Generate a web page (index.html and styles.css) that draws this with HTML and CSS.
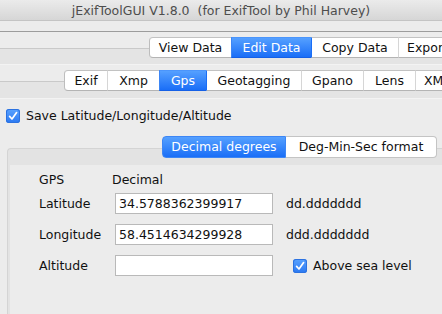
FILE: index.html
```html
<!DOCTYPE html>
<html>
<head>
<meta charset="utf-8">
<link rel="stylesheet" href="styles.css">
</head>
<body>
<div class="window">
  <div class="titlebar">jExifToolGUI V1.8.0&nbsp; (for ExifTool by Phil Harvey)</div>
  <div class="toolbar"></div>
  <div class="outer">
    <div class="tabrow tabrow-main">
      <div class="tab w-view">View Data</div>
      <div class="tab w-edit sel">Edit Data</div>
      <div class="tab w-copy">Copy Data</div>
      <div class="tab w-expo">Export</div>
    </div>
    <div class="band"></div>
    <div class="tabrow tabrow-sub">
      <div class="tab w-exif">Exif</div>
      <div class="tab w-xmp">Xmp</div>
      <div class="tab w-gps sel">Gps</div>
      <div class="tab w-geo">Geotagging</div>
      <div class="tab w-gpano">Gpano</div>
      <div class="tab w-lens">Lens</div>
      <div class="tab w-xmx">XMP</div>
    </div>
    <div class="band band-sub"></div>
    <div class="content">
      <label class="check-row">
        <span class="checkbox"><svg viewBox="0 0 14 14" width="14" height="14"><path d="M3.6 7.4 L6 10 L10.6 3.6" fill="none" stroke="#fff" stroke-width="1.7" stroke-linecap="round" stroke-linejoin="round"/></svg></span>
        <span>Save Latitude/Longitude/Altitude</span>
      </label>
      <div class="seg-wrap">
        <div class="segmented">
          <div class="seg sel seg-dec">Decimal degrees</div>
          <div class="seg seg-dms">Deg-Min-Sec format</div>
        </div>
      </div>
      <div class="panel">
        <div class="form-head">
          <span class="col-label">GPS</span>
          <span class="col-dec">Decimal</span>
        </div>
        <div class="form">
          <span class="lbl">Latitude</span>
          <div class="input">34.5788362399917</div>
          <span class="hint">dd.ddddddd</span>

          <span class="lbl">Longitude</span>
          <div class="input">58.4514634299928</div>
          <span class="hint">ddd.ddddddd</span>

          <span class="lbl">Altitude</span>
          <div class="input"></div>
          <label class="check-row small">
            <span class="checkbox"><svg viewBox="0 0 14 14" width="14" height="14"><path d="M3.6 7.4 L6 10 L10.6 3.6" fill="none" stroke="#fff" stroke-width="1.7" stroke-linecap="round" stroke-linejoin="round"/></svg></span>
            <span>Above sea level</span>
          </label>
        </div>
      </div>
    </div>
  </div>
</div>
</body>
</html>
```

FILE: styles.css
```css
html, body {
  margin: 0;
  padding: 0;
}
body {
  width: 442px;
  height: 314px;
  overflow: hidden;
  background: #ececec;
  font-family: "DejaVu Sans", "Verdana", sans-serif;
  font-size: 12.5px;
  color: #111;
}
.window {
  width: 442px;
  height: 314px;
  overflow: hidden;
}
.titlebar {
  height: 20px;
  line-height: 21px;
  text-align: center;
  font-size: 12.5px;
  color: #4d4d4d;
  background: linear-gradient(to bottom, #ebebeb, #d6d6d6);
  border-bottom: 1px solid #c4c4c4;
  white-space: nowrap;
}
.toolbar {
  height: 10px;
  background: #ececec;
  border-bottom: 1px solid #9c9c9c;
}
.outer {
  padding-top: 5px;
}
.tabrow {
  display: flex;
  height: 21px;
  white-space: nowrap;
  overflow: hidden;
}
.tabrow-main {
  padding-left: 149px;
  background: linear-gradient(to bottom, #ececec 0 11px, #c9c9c9 11px 12px, #e4e4e4 12px);
}
.tabrow-sub {
  padding-left: 64px;
  background: linear-gradient(to bottom, #ececec 0 11px, #c9c9c9 11px 12px, #e4e4e4 12px);
}
.band {
  height: 6px;
  background: #e4e4e4;
  margin-bottom: 6px;
  box-shadow: 0 1px 0 #f3f3f3;
}
.band-sub {
  height: 7px;
  margin-bottom: 0;
}
.tab {
  flex: none;
  box-sizing: border-box;
  height: 21px;
  line-height: 19px;
  text-align: center;
  background: #fff;
  border-top: 1px solid #c2c2c2;
  border-bottom: 1px solid #b4b4b4;
  border-left: 1px solid #d6d6d6;
  color: #111;
}
.tab:first-child {
  border-left: 1px solid #bdbdbd;
  border-radius: 4px 0 0 4px;
}
.tab.sel {
  color: #fff;
  background: linear-gradient(to bottom, #55a0ff, #1a6ef7);
  border-top-color: #4b95fb;
  border-bottom-color: #1560e6;
  border-left-color: #3d86f5;
}
.tab.sel + .tab {
  border-left-color: #1a6ef7;
}
.w-view { width: 82px; }
.w-edit { width: 80px; }
.w-copy { width: 87px; }
.w-expo { width: 80px; text-align: left; padding-left: 8px; }
.w-exif { width: 43px; }
.w-xmp { width: 52px; }
.w-gps { width: 47px; }
.w-geo { width: 95px; }
.w-gpano { width: 62px; }
.w-lens { width: 52px; }
.w-xmx { width: 60px; text-align: left; padding-left: 8px; }

.content {
  padding-top: 11px;
}
.check-row {
  display: flex;
  align-items: center;
  gap: 6px;
  padding-left: 6px;
  height: 14px;
  line-height: 14px;
  white-space: nowrap;
}
.checkbox {
  flex: none;
  width: 14px;
  height: 14px;
  border-radius: 3px;
  background: linear-gradient(to bottom, #5aa3ff, #2a78f2);
  box-shadow: inset 0 0 0 1px #2c72e0;
  display: flex;
}
.seg-wrap {
  display: flex;
  padding-left: 162px;
  margin-top: 13px;
  margin-bottom: -10px;
  position: relative;
  z-index: 1;
}
.segmented {
  display: flex;
  height: 22px;
  white-space: nowrap;
}
.seg {
  box-sizing: border-box;
  height: 22px;
  line-height: 20px;
  text-align: center;
  background: #fff;
  border: 1px solid #c4c4c4;
}
.seg.sel {
  color: #fff;
  background: linear-gradient(to bottom, #55a0ff, #1a6ef7);
  border-color: #3d86f5;
  border-radius: 4px 0 0 4px;
}
.seg-dec { width: 124px; }
.seg-dms {
  width: 151px;
  border-left: none;
  border-radius: 0 4px 4px 0;
}
.panel {
  margin-left: 7px;
  height: 142px;
  border-top: 1px solid #d4d4d4;
  border-left: 1px solid #d4d4d4;
  border-top-left-radius: 4px;
  background:
    linear-gradient(to right, #e3e3e3 0 2px, transparent 2px),
    linear-gradient(to bottom, #e3e3e3 0 16px, #ececec 16px);
  padding-top: 23px;
  padding-left: 31px;
}
.form-head {
  display: flex;
  height: 15px;
  line-height: 15px;
}
.col-label { width: 73px; }
.form {
  margin-top: 6px;
  display: grid;
  grid-template-columns: 76px 158px auto;
  grid-auto-rows: 21px;
  row-gap: 10px;
  align-items: center;
}
.lbl {
  line-height: 15px;
}
.input {
  box-sizing: border-box;
  height: 21px;
  line-height: 19px;
  background: #fff;
  border: 1px solid #b9b9b9;
  padding-left: 3px;
  white-space: nowrap;
}
.hint {
  padding-left: 13px;
  white-space: nowrap;
}
.check-row.small {
  padding-left: 20px;
}
```
